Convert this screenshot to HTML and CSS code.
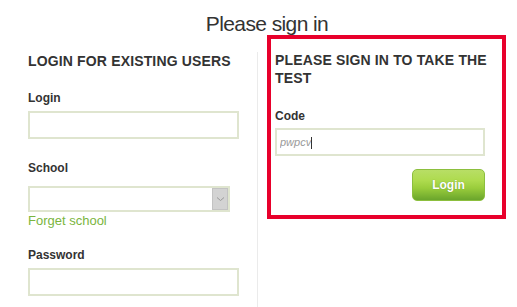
FILE: index.html
```html
<!DOCTYPE html>
<html lang="en">
<head>
<meta charset="utf-8">
<title>Please sign in</title>
<link rel="stylesheet" href="styles.css">
</head>
<body>
<div class="page">
  <h1 class="title">Please sign in</h1>
  <div class="columns">
    <section class="col-left">
      <h2 class="heading">LOGIN FOR EXISTING USERS</h2>
      <label class="label label-first">Login</label>
      <input class="text-input" type="text">
      <label class="label label-school">School</label>
      <div class="select">
        <span class="select-arrow">
          <svg width="9" height="6" viewBox="0 0 9 6"><path d="M1 1.5 L4.5 4.5 L8 1.5" fill="none" stroke="#9a9a9a" stroke-width="1"/></svg>
        </span>
      </div>
      <a class="forget" href="#">Forget school</a>
      <label class="label label-password">Password</label>
      <input class="text-input" type="password">
    </section>
    <section class="col-right">
      <h2 class="heading heading-right">PLEASE SIGN IN TO TAKE THE TEST</h2>
      <label class="label label-first">Code</label>
      <div class="code-field">
        <input class="text-input code-input" type="text" placeholder="pwpcv">
        <span class="caret"></span>
      </div>
      <div class="actions">
        <button class="btn-login" type="button">Login</button>
      </div>
    </section>
  </div>
</div>
</body>
</html>
```
FILE: styles.css
```css
html, body {
  margin: 0;
  padding: 0;
  background: #ffffff;
}

body {
  font-family: "Liberation Sans", Arial, sans-serif;
  color: #333333;
}

.page {
  width: 478px;
  padding-left: 28px;
}

.title {
  margin: 12px 0 0 0;
  font-size: 21px;
  line-height: 23px;
  font-weight: normal;
  letter-spacing: -0.6px;
  text-align: center;
  color: #333333;
}

.columns {
  display: flex;
  align-items: flex-start;
}

.col-left {
  display: flex;
  flex-direction: column;
  align-items: flex-start;
  width: 211px;
  margin-top: 17px;
  padding-right: 18px;
  padding-bottom: 60px;
  border-right: 1px solid #ebebeb;
}

.col-right {
  display: flex;
  flex-direction: column;
  align-items: flex-start;
  width: 210px;
  margin-left: 9px;
  padding: 12px 17px 14px 4px;
  border: 4px solid #e8002b;
}

.heading {
  margin: 0;
  font-size: 14px;
  line-height: 18px;
  font-weight: bold;
  letter-spacing: 0.15px;
  color: #333333;
}

.heading-right {
  margin-right: -6px;
}

.label {
  display: block;
  font-size: 12px;
  line-height: 16px;
  font-weight: bold;
  color: #333333;
}

.label-first {
  margin-top: 20px;
}

.col-right .label-first {
  margin-top: 21px;
}

.label-school {
  margin-top: 21px;
}

.label-password {
  margin-top: 18px;
}

.text-input {
  box-sizing: border-box;
  width: 211px;
  height: 28px;
  margin: 5px 0 0 0;
  padding: 0 3px;
  border: 2px solid #dfe5cf;
  border-radius: 0;
  background: #ffffff;
  font-family: "Liberation Sans", Arial, sans-serif;
  font-size: 11px;
  outline: none;
}

.col-right .text-input {
  width: 210px;
  margin-top: 0;
}

.code-field {
  position: relative;
  margin-top: 4px;
  height: 28px;
}

.code-input::placeholder {
  color: #9a9a9a;
  font-style: italic;
}

.caret {
  position: absolute;
  left: 36px;
  top: 9px;
  width: 1px;
  height: 12px;
  background: #333333;
}

.select {
  box-sizing: border-box;
  display: flex;
  justify-content: flex-end;
  width: 202px;
  height: 26px;
  margin-top: 10px;
  border: 2px solid #dfe5cf;
  background: #ffffff;
}

.select-arrow {
  box-sizing: border-box;
  display: flex;
  align-items: center;
  justify-content: center;
  width: 16px;
  height: 100%;
  background: #d3d3d3;
  border: 1px solid #c3c3c3;
}

.forget {
  display: block;
  margin-top: 1px;
  font-size: 13px;
  line-height: 16px;
  color: #7ab53e;
  text-decoration: none;
}

.actions {
  display: flex;
  justify-content: flex-end;
  width: 210px;
  margin-top: 13px;
}

.btn-login {
  width: 73px;
  height: 32px;
  padding: 0;
  border: 1px solid #8cbf3e;
  border-radius: 5px;
  background: linear-gradient(to bottom, #b8de66 0%, #aedb4e 35%, #9acd3c 60%, #6aa52c 100%);
  color: #ffffff;
  font-family: "Liberation Sans", Arial, sans-serif;
  font-size: 12px;
  font-weight: bold;
  text-shadow: 0 0 1px rgba(60, 90, 20, 0.5);
  cursor: pointer;
}
```
